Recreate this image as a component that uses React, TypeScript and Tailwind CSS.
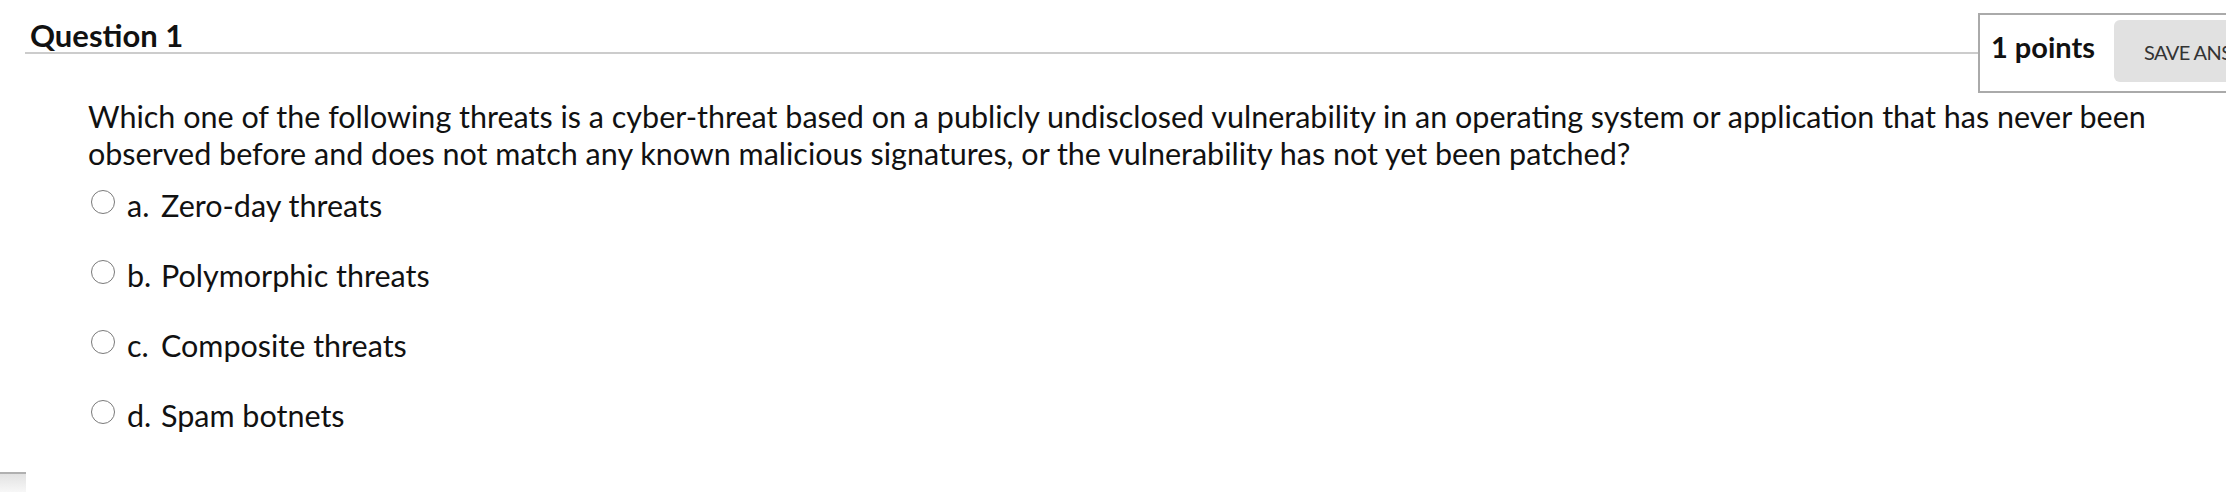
import React from "react";

const options = [
  { key: "a.", text: "Zero-day threats" },
  { key: "b.", text: "Polymorphic threats" },
  { key: "c.", text: "Composite threats" },
  { key: "d.", text: "Spam botnets" },
];

export default function App() {
  return (
    <div
      className="relative w-[2226px] h-[492px] overflow-hidden bg-white text-[#111]"
      style={{ fontFamily: "Lato, 'Liberation Sans', sans-serif" }}
    >
      {/* header */}
      <div className="flex items-start">
        <div className="ml-[25px] w-[1953px] shrink-0 h-[54px] border-b-2 border-[#cccccc] pl-[5px] pt-[17px]">
          <h2 className="text-[31px] leading-[36px] font-bold text-[#111] whitespace-nowrap">Question 1</h2>
        </div>
        <div className="mt-[13px] h-[80px] border-2 border-[#aaaaaa] flex items-start pl-[11px] pr-[20px] shrink-0">
          <span className="mt-[14px] w-[103px] text-[29px] leading-[36px] font-bold text-[#111] whitespace-nowrap">1 points</span>
          <div className="ml-[20px] mt-[5px] h-[62px] rounded-[6px] bg-[#e1e1e1] pl-[30px] pr-[30px] pt-[20px] whitespace-nowrap">
            <span className="block text-[20px] leading-[24px] tracking-[-0.6px] text-[#333] uppercase">Save Answer</span>
          </div>
        </div>
      </div>

      {/* question */}
      <div className="ml-[88px] mt-[5px] text-[30.5px] leading-[37px] text-[#111]">
        <p className="whitespace-nowrap">
          Which one of the following threats is a cyber-threat based on a publicly undisclosed vulnerability in an operating system or application that has never been
        </p>
        <p className="whitespace-nowrap">
          observed before and does not match any known malicious signatures, or the vulnerability has not yet been patched?
        </p>
      </div>

      {/* options */}
      <div className="ml-[91px] mt-[15px] flex flex-col gap-[34px]">
        {options.map((o) => (
          <div key={o.key} className="flex items-start h-[36px]">
            <div className="mt-[3px] w-[24px] h-[24px] rounded-full border-[1.5px] border-[#7a7a7a] bg-white shrink-0" />
            <span className="ml-[12px] w-[34px] text-[30.5px] leading-[36px] whitespace-nowrap">{o.key}</span>
            <span className="text-[30.5px] leading-[36px] whitespace-nowrap">{o.text}</span>
          </div>
        ))}
      </div>

      {/* bottom-left scroll hint */}
      <div className="absolute left-0 bottom-0 w-[26px] h-[20px] border-t-2 border-[#b0b0b0] bg-gradient-to-b from-[#e2e2e2] to-[#f7f7f7]" />
    </div>
  );
}
